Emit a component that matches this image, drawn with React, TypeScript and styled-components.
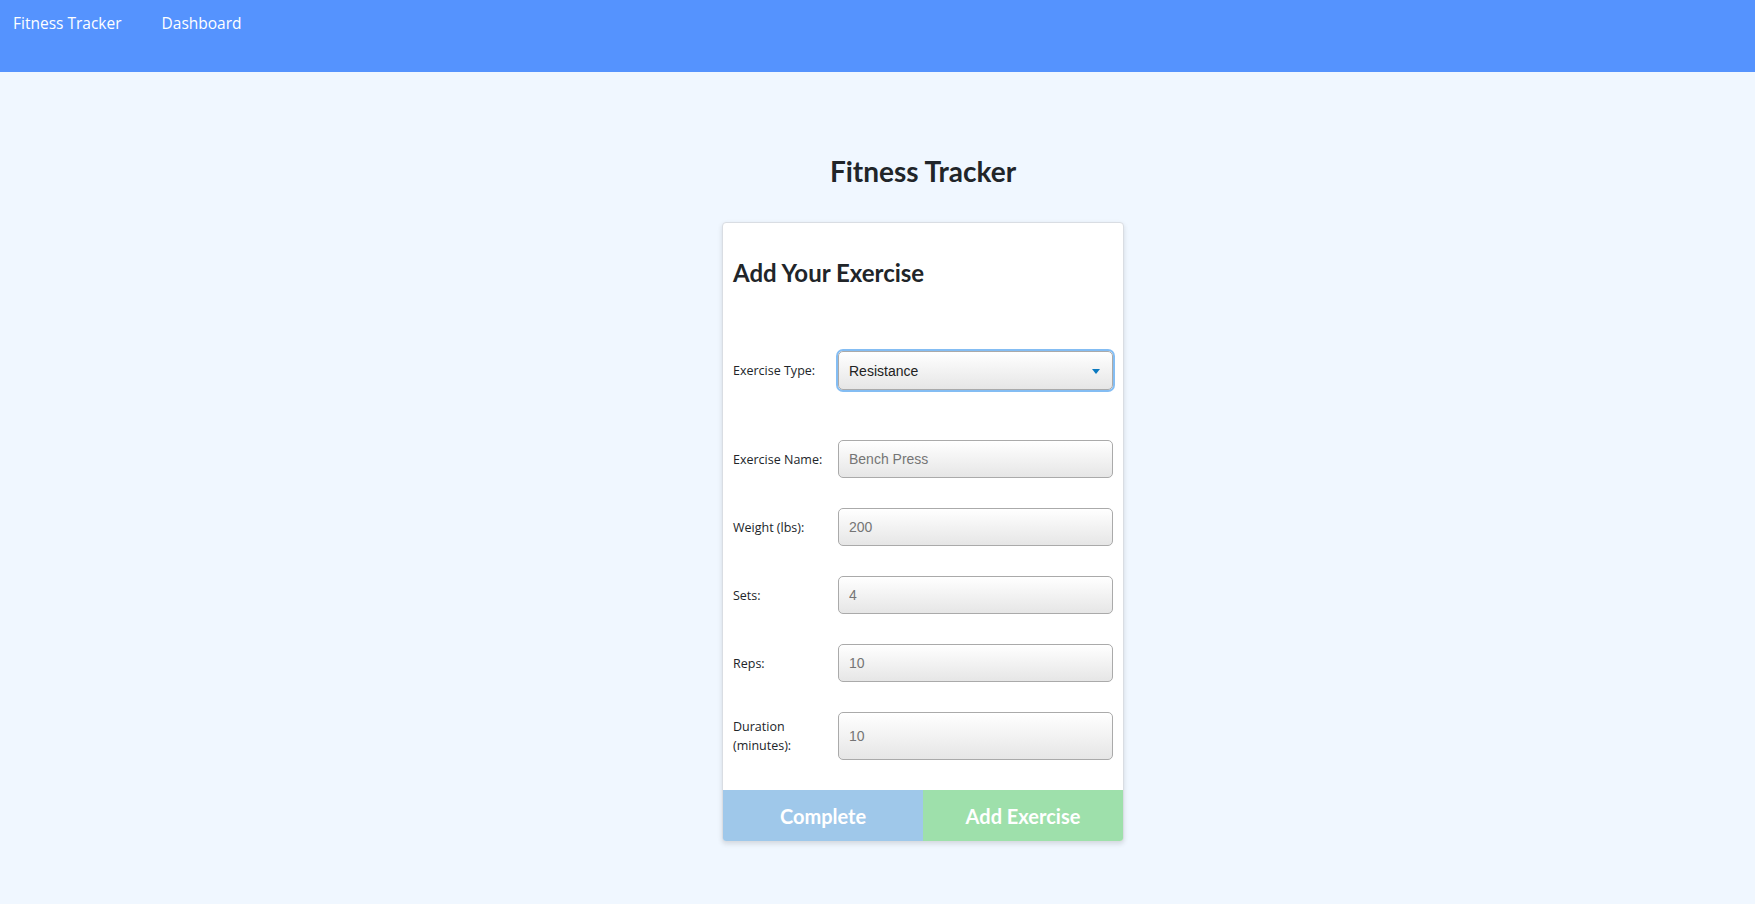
import { createGlobalStyle, styled } from "styled-components";

const GlobalStyle = createGlobalStyle`
  html, body {
    margin: 0;
    padding: 0;
    background: #f0f7ff;
  }
  body {
    font-family: "Open Sans", "Liberation Sans", sans-serif;
    color: #212529;
  }
  * {
    box-sizing: border-box;
  }
`;

const Nav = styled.nav`
  height: 72px;
  background: #5593fe;
  display: flex;
  align-items: flex-start;
  gap: 40px;
  padding: 12px 0 0 13px;
`;

const NavLink = styled.a`
  color: #ffffff;
  font-family: "Open Sans", "Noto Sans", sans-serif;
  font-size: 15.5px;
  line-height: 22px;
  text-decoration: none;
  cursor: pointer;
`;

const Main = styled.main`
  display: flex;
  flex-direction: column;
  align-items: center;
  padding: 0 0 60px 91px;
`;

const Title = styled.h1`
  font-family: Lato, "Open Sans", sans-serif;
  font-weight: 700;
  font-size: 28px;
  line-height: 34px;
  margin: 82px 0 34px;
`;

const Card = styled.div`
  width: 402px;
  background: #ffffff;
  border: 1px solid #d9dde3;
  border-radius: 4px;
  box-shadow: 0 2px 5px rgba(0, 0, 0, 0.12);
  overflow: hidden;
`;

const Form = styled.form`
  padding: 35px 10px 0 10px;
`;

const CardTitle = styled.h2`
  font-family: Lato, "Open Sans", sans-serif;
  font-weight: 700;
  font-size: 24px;
  line-height: 29px;
  margin: 0 0 64px;
`;

const Row = styled.div<{ $gap?: number }>`
  display: grid;
  grid-template-columns: 105px 275px;
  align-items: center;
  margin-bottom: ${(p) => p.$gap ?? 30}px;
`;

const Label = styled.label`
  font-family: "Open Sans", "Noto Sans", sans-serif;
  font-size: 12.5px;
  line-height: 19px;
  color: #212529;
  width: 104px;
`;

const fieldBase = `
  width: 275px;
  border: 1px solid #aaaaaa;
  border-radius: 5px;
  background: linear-gradient(to bottom, #ffffff 0%, #e6e6e6 100%);
  font-family: "Liberation Sans", Arial, sans-serif;
  font-size: 14px;
  padding: 0 10px;
  outline: none;
`;

const Input = styled.input<{ $tall?: boolean }>`
  ${fieldBase}
  height: ${(p) => (p.$tall ? 48 : 38)}px;
  color: #555;

  &::placeholder {
    color: #757575;
  }
`;

const SelectBox = styled.div`
  ${fieldBase}
  position: relative;
  height: 39px;
  display: flex;
  align-items: center;
  color: #222;
  box-shadow: 0 0 0 2px #84bdf3;
  cursor: pointer;
`;

const Caret = styled.span`
  position: absolute;
  right: 12px;
  top: 17px;
  width: 0;
  height: 0;
  border-left: 4.5px solid transparent;
  border-right: 4.5px solid transparent;
  border-top: 5px solid #0b79bf;
`;

const ButtonBar = styled.div`
  display: grid;
  grid-template-columns: 1fr 1fr;
`;

const ActionButton = styled.button<{ $color: string }>`
  height: 51px;
  border: none;
  background: ${(p) => p.$color};
  color: #ffffff;
  font-family: Lato, "Open Sans", sans-serif;
  font-weight: 700;
  font-size: 20px;
  cursor: pointer;
`;

const fields = [
  { label: "Exercise Name:", placeholder: "Bench Press" },
  { label: "Weight (lbs):", placeholder: "200" },
  { label: "Sets:", placeholder: "4" },
  { label: "Reps:", placeholder: "10" },
];

const App = () => {
  return (
    <>
      <GlobalStyle />
      <Nav>
        <NavLink>Fitness Tracker</NavLink>
        <NavLink>Dashboard</NavLink>
      </Nav>
      <Main>
        <Title>Fitness Tracker</Title>
        <Card>
          <Form onSubmit={(e) => e.preventDefault()}>
            <CardTitle>Add Your Exercise</CardTitle>
            <Row $gap={50}>
              <Label>Exercise Type:</Label>
              <SelectBox>
                Resistance
                <Caret />
              </SelectBox>
            </Row>
            {fields.map((f) => (
              <Row key={f.label}>
                <Label>{f.label}</Label>
                <Input placeholder={f.placeholder} />
              </Row>
            ))}
            <Row>
              <Label>Duration (minutes):</Label>
              <Input $tall placeholder="10" />
            </Row>
          </Form>
          <ButtonBar>
            <ActionButton $color="#9fc8ea">Complete</ActionButton>
            <ActionButton $color="#9ee0ab">Add Exercise</ActionButton>
          </ButtonBar>
        </Card>
      </Main>
    </>
  );
};

export default App;
